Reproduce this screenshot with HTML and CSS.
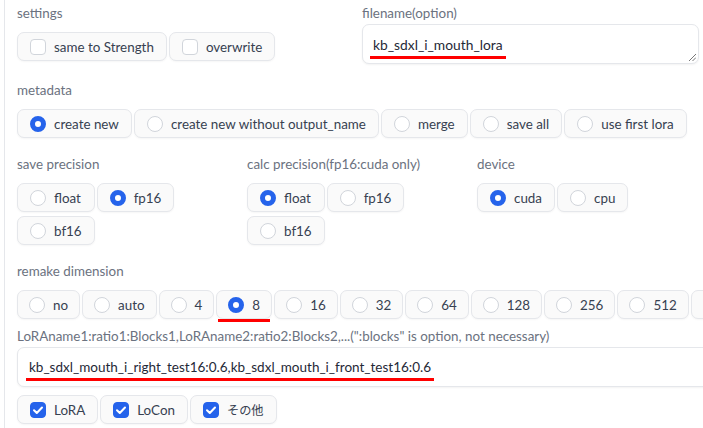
FILE: index.html
```html
<!DOCTYPE html>
<html>
<head>
<meta charset="utf-8">
<link rel="stylesheet" href="styles.css">
</head>
<body>
<div class="page">
  <div class="row two">
    <div class="block">
      <div class="label">settings</div>
      <div class="opts">
        <label class="opt"><span class="cb"></span><span>same to Strength</span></label>
        <label class="opt"><span class="cb"></span><span>overwrite</span></label>
      </div>
    </div>
    <div class="block">
      <div class="label">filename(option)</div>
      <div class="tbox fname"><span class="mark">kb_sdxl_i_mouth_lora</span><span class="grip"><svg width="8" height="8" viewBox="0 0 8 8"><path d="M1 8 L8 1 M4.5 8 L8 4.5" stroke="#777" stroke-width="1"/></svg></span></div>
    </div>
  </div>

  <div class="block sec">
    <div class="label">metadata</div>
    <div class="opts">
      <label class="opt"><span class="rd on"></span><span>create new</span></label>
      <label class="opt"><span class="rd"></span><span>create new without output_name</span></label>
      <label class="opt"><span class="rd"></span><span>merge</span></label>
      <label class="opt"><span class="rd"></span><span>save all</span></label>
      <label class="opt"><span class="rd"></span><span>use first lora</span></label>
    </div>
  </div>

  <div class="row three sec">
    <div class="block">
      <div class="label">save precision</div>
      <div class="opts pair">
        <label class="opt"><span class="rd"></span><span>float</span></label>
        <label class="opt"><span class="rd on"></span><span>fp16</span></label>
        <label class="opt"><span class="rd"></span><span>bf16</span></label>
      </div>
    </div>
    <div class="block">
      <div class="label">calc precision(fp16:cuda only)</div>
      <div class="opts pair">
        <label class="opt"><span class="rd on"></span><span>float</span></label>
        <label class="opt"><span class="rd"></span><span>fp16</span></label>
        <label class="opt"><span class="rd"></span><span>bf16</span></label>
      </div>
    </div>
    <div class="block">
      <div class="label">device</div>
      <div class="opts pair">
        <label class="opt"><span class="rd on"></span><span>cuda</span></label>
        <label class="opt"><span class="rd"></span><span>cpu</span></label>
      </div>
    </div>
  </div>

  <div class="block sec">
    <div class="label">remake dimension</div>
    <div class="opts nowrap">
      <label class="opt"><span class="rd"></span><span>no</span></label>
      <label class="opt"><span class="rd"></span><span>auto</span></label>
      <label class="opt"><span class="rd"></span><span>4</span></label>
      <label class="opt"><span class="rd on"></span><span>8</span><span class="uline"></span></label>
      <label class="opt"><span class="rd"></span><span>16</span></label>
      <label class="opt"><span class="rd"></span><span>32</span></label>
      <label class="opt"><span class="rd"></span><span>64</span></label>
      <label class="opt"><span class="rd"></span><span>128</span></label>
      <label class="opt"><span class="rd"></span><span>256</span></label>
      <label class="opt"><span class="rd"></span><span>512</span></label>
      <label class="opt"><span class="rd"></span><span>1024</span></label>
    </div>
  </div>

  <div class="block lora">
    <div class="label">LoRAname1:ratio1:Blocks1,LoRAname2:ratio2:Blocks2,...(":blocks" is option, not necessary)</div>
    <div class="tbox wide"><span class="mark">kb_sdxl_mouth_i_right_test16:0.6,kb_sdxl_mouth_i_front_test16:0.6</span></div>
  </div>

  <div class="opts types">
    <label class="opt"><span class="cb on"><svg width="16" height="16" viewBox="0 0 16 16"><path d="M4 8.2 L6.8 11 L12 5.5" fill="none" stroke="#fff" stroke-width="2" stroke-linecap="round" stroke-linejoin="round"/></svg></span><span>LoRA</span></label>
    <label class="opt"><span class="cb on"><svg width="16" height="16" viewBox="0 0 16 16"><path d="M4 8.2 L6.8 11 L12 5.5" fill="none" stroke="#fff" stroke-width="2" stroke-linecap="round" stroke-linejoin="round"/></svg></span><span>LoCon</span></label>
    <label class="opt"><span class="cb on"><svg width="16" height="16" viewBox="0 0 16 16"><path d="M4 8.2 L6.8 11 L12 5.5" fill="none" stroke="#fff" stroke-width="2" stroke-linecap="round" stroke-linejoin="round"/></svg></span><span class="jp">その他</span></label>
  </div>
</div>
</body>
</html>
```

FILE: styles.css
```css
html, body {
  margin: 0;
  padding: 0;
  background: #fff;
  overflow: hidden;
  width: 703px;
  height: 428px;
}
body {
  font-family: Lato, "Noto Sans CJK JP", sans-serif;
  font-size: 13.4px;
  color: #374151;
}
.page {
  margin-left: 4px;
  border-left: 1px solid #e5e7eb;
  padding: 3px 0 0 12px;
  width: 900px;
  height: 428px;
  box-sizing: border-box;
}
.row {
  display: grid;
  column-gap: 16px;
}
.two {
  grid-template-columns: 329px 337px;
}
.three {
  grid-template-columns: 214px 214px 214px;
}
.sec {
  margin-top: 16px;
}
.label {
  line-height: 20px;
  height: 20px;
  color: #6b7280;
  font-size: 13.4px;
  white-space: nowrap;
}
.opts {
  display: flex;
  flex-wrap: wrap;
  column-gap: 2px;
  row-gap: 4px;
  margin-top: 9px;
}
.nowrap {
  flex-wrap: nowrap;
}
.nowrap .opt {
  padding: 0 11px;
}
.pair {
  display: grid;
  grid-template-columns: max-content max-content;
  justify-content: start;
  column-gap: 2px;
  row-gap: 4px;
}
.opt {
  position: relative;
  display: flex;
  align-items: center;
  gap: 8px;
  height: 29px;
  box-sizing: border-box;
  padding: 0 12px;
  border: 1px solid #e5e7eb;
  border-radius: 7px;
  background: #fafafa;
  box-shadow: 0 1px 2px rgba(0,0,0,0.04);
  white-space: nowrap;
  flex: none;
}
.cb {
  width: 16px;
  height: 16px;
  box-sizing: border-box;
  border: 1px solid #d1d5db;
  border-radius: 4px;
  background: #fff;
  flex: none;
  display: flex;
}
.cb.on {
  background: #2563eb;
  border-color: #2563eb;
}
.cb.on svg {
  margin: -1px;
}
.rd {
  width: 16px;
  height: 16px;
  box-sizing: border-box;
  border: 1px solid #d1d5db;
  border-radius: 50%;
  background: #fff;
  flex: none;
}
.rd.on {
  border: 5px solid #2563eb;
  background: #fff;
}
.tbox {
  position: relative;
  margin-top: 1px;
  height: 40px;
  box-sizing: border-box;
  border: 1px solid #e5e7eb;
  border-radius: 7px;
  background: #fff;
  box-shadow: 0 1px 2px rgba(0,0,0,0.05);
  padding: 0 10px;
  display: flex;
  align-items: center;
  font-size: 13.8px;
  color: #1f2937;
  white-space: nowrap;
}
.mark {
  position: relative;
}
.mark::after {
  content: "";
  position: absolute;
  left: -3px;
  right: -3px;
  bottom: -6px;
  height: 3px;
  background: #ff0000;
}
.grip {
  position: absolute;
  right: 2px;
  bottom: 2px;
  width: 8px;
  height: 8px;
  display: flex;
}
.uline {
  position: absolute;
  left: 1px;
  right: 1px;
  bottom: -4px;
  height: 3px;
  background: #ff0000;
}
.lora {
  margin-top: 7px;
}
.wide {
  width: 800px;
  border-radius: 7px 0 0 7px;
  padding-left: 11px;
  font-size: 13.5px;
}
.types {
  margin-top: 8px;
}
.jp {
  font-family: "Noto Sans CJK JP", sans-serif;
  font-size: 12.2px;
}
```
